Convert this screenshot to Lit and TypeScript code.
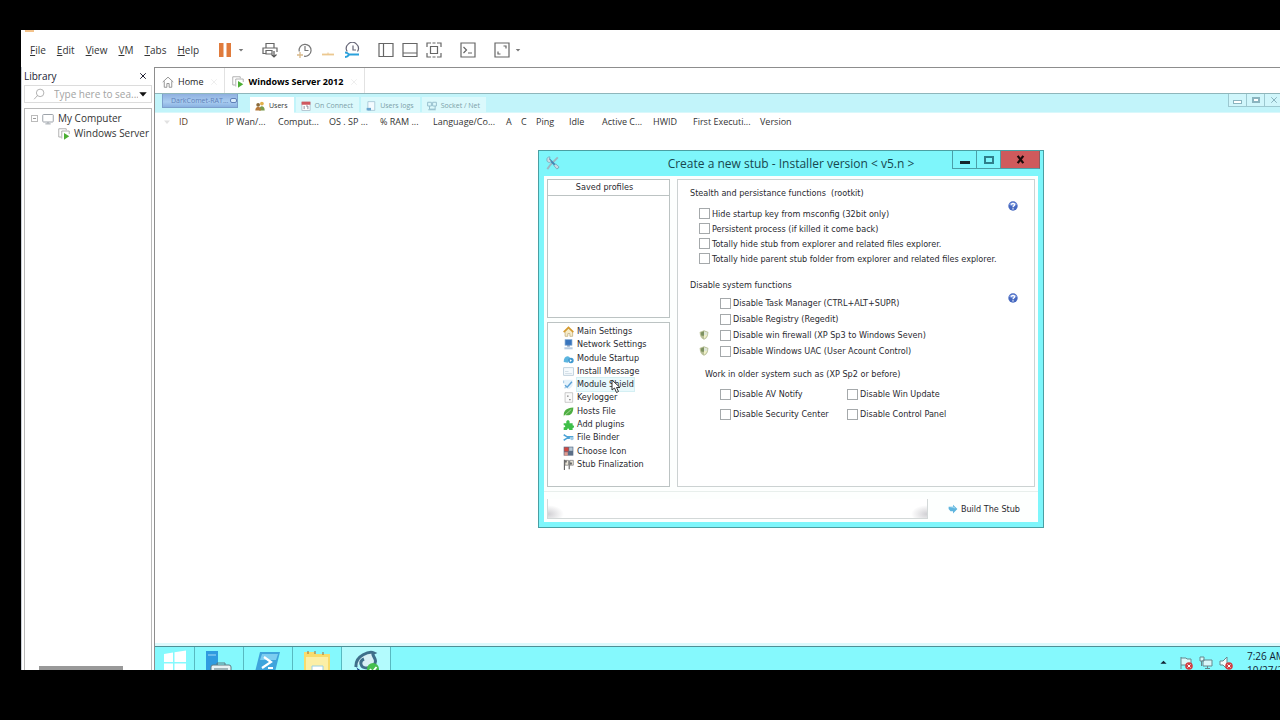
import { LitElement, html, css, svg, nothing } from "lit";
import { customElement } from "lit/decorators.js";

const glyphs: Record<string, any> = {
  home: svg`<path d="M1 8 8 1.500 15 8M3 7v8h3.500v-5h3v5H13V7" fill="none" stroke="#8a8a8a" stroke-width="1.200"/>`,
  vm: svg`<path d="M4 12H1V1h10v2" fill="none" stroke="#999"/><path d="M5 14V4h10v4" fill="none" stroke="#999"/><path d="M8 6.500v9l7-4.500z" fill="#4cae34"/>`,
  monitor: svg`<rect x="1" y="2" width="14" height="10" rx="1" fill="none" stroke="#9aa0a8" stroke-width="1.300"/><path d="M8 12v2M4.500 14.500h7" stroke="#9aa0a8" stroke-width="1.300"/>`,
  search: svg`<circle cx="9.500" cy="6.500" r="5" fill="none" stroke="#9a9a9a"/><path d="M6 10 1.500 15" stroke="#9a9a9a"/>`,
  pause: svg`<path d="M2 1h4.500v14H2zM9.500 1H14v14H9.500z" fill="#e07b3c"/>`,
  print: svg`<path d="M4 6V1.500h8V6M4 11.500H1V6h14v4M4 8.500h6V12H4z" fill="none" stroke="#666" stroke-width="1.200"/><path d="M12 9v6M9.500 12.500l2.500 2.500 2.500-2.500" fill="none" stroke="#555" stroke-width="1.200"/>`,
  clockadd: svg`<path d="M3.200 9.500A6 6 0 1 1 8 14.200M9 4v4.500h3.500" fill="none" stroke="#777" stroke-width="1.200"/><path d="M4 10v6M1 13h6" stroke="#d9b98a" stroke-width="1.300"/>`,
  dash: svg`<path d="M2 12.500h12" stroke="#ecc890" stroke-width="1.800"/><path d="M8 10.500v2" stroke="#ecc890"/>`,
  clockfix: svg`<path d="M3.200 9.500A6 6 0 1 1 13.500 9.500M9 3.500V8h3" fill="none" stroke="#667" stroke-width="1.200"/><path d="M1 10.500c3 0 3 1.500 4 2h10M1 15c3 0 3-1.500 4-2" fill="none" stroke="#2aa1dc" stroke-width="1.900"/>`,
  sideleft: svg`<path d="M1 1.500h14v13H1zM5.500 1.500v13" fill="none" stroke="#666" stroke-width="1.200"/>`,
  sidebottom: svg`<path d="M1 1.500h14v13H1zM1 11h14" fill="none" stroke="#666" stroke-width="1.200"/>`,
  fit: svg`<path d="M1 5V1h4M11 1h4v4M15 11v4h-4M5 15H1v-4M6.500 1h3M6.500 15h3M4.500 4.500h7v7h-7z" fill="none" stroke="#666" stroke-width="1.200"/>`,
  console: svg`<path d="M1 1h14v14H1zM3.500 5 6.500 8l-3 3M8 11h4" fill="none" stroke="#666" stroke-width="1.200"/>`,
  full: svg`<path d="M1 1h14v14H1zM9.500 4H12v2.500M4 9.500V12h2.500" fill="none" stroke="#666" stroke-width="1.200"/>`,
  caret: svg`<path d="M2 5h12l-6 7z" fill="currentColor"/>`,
  caretup: svg`<path d="M1 12h14L8 5z" fill="#123"/>`,
  close: svg`<path d="M2.500 2.500l11 11M13.500 2.500l-11 11" stroke="currentColor" stroke-width="2"/>`,
  closebold: svg`<path d="M3 1.500l10 13M13 1.500l-10 13" stroke="currentColor" stroke-width="4"/>`,
  users: svg`<circle cx="11" cy="4" r="3" fill="#e3b04b"/><path d="M6.500 15c0-9 9-9 9 0z" fill="#7a9a4a"/><circle cx="5" cy="6" r="3" fill="#8a6a3a"/><path d="M.5 15c0-8 9-8 9 0z" fill="#b7793a"/>`,
  calendar: svg`<rect x="1.500" y="2" width="13" height="13" fill="#fff" stroke="#9ab"/><path d="M1 1h14v5H1z" fill="#cf5860"/><path d="M5 8v5M8 8h3v5" stroke="#889" fill="none" stroke-width="1.500"/>`,
  page: svg`<path d="M3 1h11v14H3z" fill="#f4fbff" stroke="#8fb3c9"/><path d="M1 11h7v4H1z" fill="#6aa5cf"/>`,
  socket: svg`<path d="M1 2h6v6H1zM9 2h6v6H9zM4 8v5h9V8M2 14h12" fill="none" stroke="#93bccb" stroke-width="1.500"/>`,
  tools: svg`<path d="M13.500 1.500 5 10 1.500 15" stroke="#9db6c2" stroke-width="2.200" fill="none"/><path d="M3 3l11 11" stroke="#3f85b5" stroke-width="2.200"/><path d="M1 4.500C1 2 2 1 4.500 1L4 4l2 2-2 1.500C2 7 1 6.500 1 4.500zM11 9l4 3.500L12.500 15 9 11z" fill="#c7dbe4" stroke="#6895ab" stroke-width=".7"/>`,
  help: svg`<circle cx="8" cy="8" r="7.500" fill="#4668c0"/><path d="M2 6c1-5 11-5 12 0-3 2-9 2-12 0z" fill="#8fa8e6"/><path d="M5.500 6C5.500 3 10.500 3 10.500 6c0 2-2.500 2-2.500 4M8 11.500v2" fill="none" stroke="#fff" stroke-width="2"/>`,
  shield: svg`<path d="M8 .5 15 3c0 6-2 10-7 12.500C3 13 1 9 1 3z" fill="#b8bf96"/><path d="M8 2 3 4c0 3 .5 4 1 5h4z" fill="#7d9160"/><path d="M8 8h5c-1 3-2.500 4.500-5 6z" fill="#eff0c8"/><path d="M8 2v6h5.300L13.500 4z" fill="#dfe6d8"/>`,
  house: svg`<path d="M3 8v7h4v-4h3v4h4V8L8 3z" fill="#f7ecc8" stroke="#b9a675"/><path d="M1 9 8 2l7 7" stroke="#d59b30" stroke-width="2.400" fill="none"/>`,
  network: svg`<rect x="3" y="1" width="10" height="8" fill="#3975bd" stroke="#7aa4cf"/><path d="M6 9h4v2H6z" fill="#7290b5"/><path d="M2 12h12v3H2z" fill="#b8cce0"/>`,
  startup: svg`<path d="M1 13c0-7 4-10 9-7l-3 8z" fill="#5cb5df"/><circle cx="11.500" cy="11" r="4" fill="#3f98cf"/><path d="M10 9l3 2-3 2z" fill="#fff"/>`,
  message: svg`<rect x="1" y="2.500" width="14" height="11" fill="#f5fafd" stroke="#a9bfd0"/><path d="M3 11h10M3 8h5" stroke="#c5d3de"/>`,
  shieldblue: svg`<path d="M2 1h12v8c-1 3-4 5-6 6-2-1-5-3-6-6z" fill="#e4f2fb"/><path d="M3 9l3 3 7-8" stroke="#5ba1d6" stroke-width="2" fill="none"/><path d="M1 2v4M2 13l4-1" stroke="#9cc6e4" stroke-width="1.500"/>`,
  key: svg`<path d="M3 1h11v14H3z" fill="#fafafa" stroke="#b5b5b5"/><path d="M6 5h2v2H6zM9 10h2v2H9z" fill="#777"/>`,
  leaf: svg`<path d="M1 14C1 6 5 3 15 2c0 9-5 13-12 11z" fill="#4fae43"/><path d="M1 15 12 5" stroke="#c6eab9"/>`,
  plugin: svg`<path d="M1 6h4C3 1 11 0 9.500 6H14v3c3 0 3 4 0 4v3H9c0-3-3-3-3 0H1v-4c3 0 3-3 0-3z" fill="#3fbf49"/>`,
  binder: svg`<path d="M1 4l5 3h9M1 12l5-3h4" stroke="#4ca3d6" stroke-width="2.200" fill="none"/><circle cx="13" cy="9.500" r="2.500" fill="#9fcbe6"/>`,
  choose: svg`<rect x="1" y="1" width="14" height="13" fill="#5b6e87"/><path d="M2 2h6v6H2z" fill="#d2473f"/><path d="M9 2h5v5H9z" fill="#b6c7d5"/><path d="M2 9h5v5H2z" fill="#e39a8e"/>`,
  flag: svg`<path d="M2 1v15M9 2v13" stroke="#555" stroke-width="1.500"/><path d="M3 2h5v7H3zM10 2h5v7h-5z" fill="#e9e4d7" stroke="#777"/><path d="M3 2h2.500v3H3zM10 5h3v3h-3z" fill="#666"/>`,
  arrow: svg`<path d="M1 4.500h7V1l7 7-7 7v-3.500H4L1 8z" fill="#5eb5de"/><path d="M2 5h7V3l3 4z" fill="#a9dcf2"/>`,
};

const icon = (name: string, cls = "") =>
  html`<svg class="ic ${cls}" viewBox="0 0 16 16" aria-hidden="true">${glyphs[name]}</svg>`;

const iconStyles = css`
  :host, * { box-sizing: border-box; }
  .ic { width: 16px; height: 16px; flex: none; display: block; }
  .s8 { width: 8px; height: 8px; }
  .s10 { width: 10px; height: 10px; }
  .s12 { width: 12px; height: 12px; }
  .s6 { width: 6px; height: 6px; }
  button { font: inherit; color: inherit; background: none; border: 0; padding: 0; margin: 0; }
`;

@customElement("stub-dialog")
class StubDialog extends LitElement {
  static styles = [
    iconStyles,
    css`
      :host {
        display: flex;
        flex-direction: column;
        border: 1px solid #4a9fa3;
        background: #7ef6fb;
        padding: 0 5px 5px;
        font: 9px/16px "DejaVu Sans Condensed", "Open Sans", sans-serif;
        color: #2a2a30;
        white-space: nowrap;
      }
      .title { display: flex; height: 25px; padding-left: 2px; }
      .title .ic { margin-top: 5px; width: 14px; height: 14px; }
      .title h1 {
        flex: 1; margin: 0; text-align: center; padding-left: 70px;
        font: 12px/25px "Open Sans", sans-serif; color: #17474f;
      }
      .winbtns { display: flex; height: 18px; margin-right: -2px; }
      .winbtns button {
        border: 1px solid #4b9fa8; border-top: 0; border-right: 0; width: 24px;
        display: grid; place-items: center;
      }
      .winbtns .x { width: 40px; background: #cf5a5c; border-right: 1px solid #8f5a60; }
      .min { width: 10px; height: 3px; background: #15282b; margin-top: 5px; }
      .max { width: 10px; height: 8px; border: 2px solid #2e7f8a; }
      .winbtns .ic { width: 9px; height: 9px; margin: 0; color: #1c0b0b; }
      .client { flex: 1; display: flex; flex-direction: column; background: #fdfffe; }
      .body {
        flex: 1; display: grid; grid-template-columns: 123px 1fr; gap: 7px;
        padding: 3px 3px 4px; border-bottom: 1px solid #e8efec;
      }
      .left { display: grid; grid-template-rows: 139px 1fr; gap: 4px; }
      .box { border: 1px solid #bcc3c3; background: #fff; }
      .box h2 {
        font: inherit; line-height: 15px; margin: 0; text-align: center;
        padding-right: 8px; border-bottom: 1px solid #bcc3c3;
      }
      .tree {
        position: relative; list-style: none; margin: 0; padding: 2px 0 15px 15px;
        display: flex; flex-direction: column; justify-content: space-between;
        line-height: 13px;
      }
      .tree li { display: flex; align-items: center; gap: 3px; }
      .tree .ic { width: 11px; height: 11px; }
      .tree .on { background: #e9f9fc; outline: 1px solid #d4eff3; }
      .cursor { position: absolute; left: 63px; top: 56px; width: 10px; height: 14px; }
      .panel { border: 1px solid #ccd2d2; background: #fff; padding: 5px 16px 8px 12px; }
      section { display: grid; grid-template-columns: 1fr 10px; }
      section + section { margin-top: 11px; }
      section > .ic { margin-top: 16px; }
      h3 { font: inherit; margin: 0; }
      .rows { padding: 5px 0 0 9px; }
      .rows label { height: 15px; }
      .rows2 { padding: 2px 0 0 9px; }
      .rows2 label { height: 16px; }
      label, .line { display: flex; align-items: center; }
      .line .slot { width: 21px; flex: none; }
      label { gap: 2px; }
      input {
        appearance: none; width: 11px; height: 11px; margin: 0; flex: none;
        border: 1px solid #a5a9ab; background: #fff;
      }
      .older { padding: 7px 0 0 15px; }
      .grid {
        display: grid; grid-template-columns: 127px 1fr; padding: 2px 0 0 30px;
      }
      .grid label { height: 20px; }
      .foot { display: flex; align-items: center; height: 30px; padding: 3px 18px 0 3px; }
      .progress {
        flex: 1; height: 20px; border: 1px solid #d3d8d8; border-top: 0;
        background:
          radial-gradient(ellipse at 0 70%, #d0cfd3, #fff0 70%) left bottom / 16px 13px no-repeat,
          radial-gradient(ellipse at 100% 70%, #d0cfd3, #fff0 70%) right bottom / 16px 13px no-repeat,
          #fff;
      }
      .build { display: flex; align-items: center; gap: 3px; margin-left: 20px; }
    `,
  ];

  check(text: string) {
    return html`<label><input type="checkbox" />${text}</label>`;
  }

  render() {
    const tree = [
      ["house", "Main Settings"], ["network", "Network Settings"], ["startup", "Module Startup"],
      ["message", "Install Message"], ["shieldblue", "Module Shield"], ["key", "Keylogger"],
      ["leaf", "Hosts File"], ["plugin", "Add plugins"], ["binder", "File Binder"],
      ["choose", "Choose Icon"], ["flag", "Stub Finalization"],
    ];
    const system: [string, boolean][] = [
      ["Disable Task Manager (CTRL+ALT+SUPR)", false],
      ["Disable Registry (Regedit)", false],
      ["Disable win firewall (XP Sp3 to Windows Seven)", true],
      ["Disable Windows UAC (User Acount Control)", true],
    ];
    return html`
      <div class="title">
        ${icon("tools")}
        <h1>Create a new stub - Installer version &lt; v5.n &gt;</h1>
        <div class="winbtns">
          <button aria-label="Minimize"><span class="min"></span></button>
          <button aria-label="Maximize"><span class="max"></span></button>
          <button class="x" aria-label="Close">${icon("closebold")}</button>
        </div>
      </div>
      <div class="client">
        <div class="body">
          <div class="left">
            <div class="box"><h2>Saved profiles</h2></div>
            <ul class="box tree">
              ${tree.map(([i, t]) => html`<li>${icon(i)}<span class=${t === "Module Shield" ? "on" : ""}>${t}</span></li>`)}
              <svg class="cursor" viewBox="0 0 10 14" aria-hidden="true"><path d="M1 1v10l2.500-2 2 4.500 2-1-2-4H9z" fill="#fff" stroke="#333"/></svg>
            </ul>
          </div>
          <div class="panel">
            <section>
              <div>
                <h3>Stealth and persistance functions &nbsp;(rootkit)</h3>
                <div class="rows">
                  ${["Hide startup key from msconfig (32bit only)",
                    "Persistent process (if killed it come back)",
                    "Totally hide stub from explorer and related files explorer.",
                    "Totally hide parent stub folder from explorer and related files explorer."].map((t) => this.check(t))}
                </div>
              </div>
              ${icon("help", "s10")}
            </section>
            <section>
              <div>
                <h3>Disable system functions</h3>
                <div class="rows2">
                  ${system.map(([t, s]) => html`<div class="line"><span class="slot">${s ? icon("shield", "s10") : nothing}</span>${this.check(t)}</div>`)}
                </div>
              </div>
              ${icon("help", "s10")}
            </section>
            <h3 class="older">Work in older system such as (XP Sp2 or before)</h3>
            <div class="grid">
              ${["Disable AV Notify", "Disable Win Update", "Disable Security Center", "Disable Control Panel"].map((t) => this.check(t))}
            </div>
          </div>
        </div>
        <div class="foot">
          <div class="progress"></div>
          <button class="build">${icon("arrow", "s10")}Build The Stub</button>
        </div>
      </div>
    `;
  }
}

@customElement("app-root")
class AppRoot extends LitElement {
  static styles = [
    iconStyles,
    css`
      :host {
        display: flex; flex-direction: column; height: 100vh; background: #000;
        padding: 30px 0 50px 21px; overflow: hidden;
        font: 11px/16px "Open Sans", sans-serif; color: #333; white-space: nowrap;
      }
      .app { flex: 1; min-height: 0; display: flex; flex-direction: column; background: #fff; overflow: hidden; }
      .logo { height: 2px; width: 9px; margin-left: 4px; background: #f3c28a; }
      .menu { display: flex; align-items: center; height: 35px; padding-left: 9px; }
      .menus { display: flex; gap: 11px; width: 187px; font-size: 10px; }
      .menus button::first-letter { text-decoration: underline; }
      .tools { display: flex; align-items: center; color: #777; }
      .tools button { display: flex; align-items: center; gap: 5px; }
      .g8 { margin-left: 8px; }
      .g18 { margin-left: 18px; }
      .work { flex: 1; min-height: 0; display: grid; grid-template-columns: 131px 1fr; gap: 2px; }
      aside { display: flex; flex-direction: column; padding-left: 2px; border-left: 1px solid #c9ced6; }
      .lib { display: flex; justify-content: space-between; align-items: center; height: 18px; font-size: 10px; padding-right: 5px; color: #223; }
      .find {
        display: flex; align-items: center; height: 18px; padding: 0 3px 0 8px;
        border: 1px solid #dcdcdc; color: #111;
      }
      .find input {
        flex: 1; min-width: 0; border: 0; outline: 0; padding: 0 0 0 9px; height: 16px;
        font: 10px/16px "Open Sans", sans-serif; background: none;
      }
      .find input::placeholder { color: #a3a3a3; opacity: 1; }
      .tree {
        flex: 1; margin-top: 5px; border: 1px solid #b9b9b9; border-bottom: 0; padding-top: 2px;
        display: flex; flex-direction: column; overflow: hidden; line-height: 15px; font-size: 10px;
      }
      .node { display: flex; align-items: center; gap: 4px; padding-left: 6px; }
      .child { padding-left: 33px; }
      .exp { width: 7px; height: 7px; border: 1px solid #bbb; display: grid; place-items: center; }
      .exp::after { content: ""; width: 3px; height: 1px; background: #999; }
      .scroll { height: 4px; width: 84px; margin: auto 0 0 14px; background: #999; }
      main { display: flex; flex-direction: column; min-width: 0; border: 1px solid #8d8d8d; border-width: 1px 0 0 1px; position: relative; }
      .tabs { display: flex; height: 25px; font-size: 9px; }
      .tab {
        display: flex; align-items: center; gap: 4px; padding: 2px 6px 0 7px;
        border-right: 1px solid #e2e2e2; color: #222; height: 100%;
      }
      .tab.cur { font-weight: 700; color: #000; }
      .tab .end { color: #eee; margin-left: 3px; }
      .mdi { display: flex; height: 20px; background: #c2f4fa; border-top: 1px solid #8fb6bb; border-bottom: 1px solid #d9f8fb; }
      .wintitle {
        display: flex; align-items: center; height: 14px; margin-left: 7px; width: 76px; padding-left: 8px; gap: 2px;
        background: linear-gradient(#8fb0e0, #a9cdf0 60%, #8ab2e2); border: 1px solid #7da0cc; border-top: 0;
        font-size: 7px; color: #5f80b8;
      }
      .knob { width: 7px; height: 5px; border: 1px solid #5f80b8; border-radius: 2px; background: #d9ecfb; }
      .pages { display: flex; gap: 2px; margin: 3px 0 0 12px; font-size: 7px; color: #7ba0a8; }
      .pages button { display: flex; align-items: center; gap: 4px; padding: 2px 6px 0 5px; background: #dbf9fc; height: 16px; }
      .pages .cur { background: #fff; color: #333; }
      .mdibtns { display: flex; margin: 0 -2px 0 auto; height: 13px; color: #8ab4bf; }
      .mdibtns button { width: 18px; border: 1px solid #9cc8d0; border-top: 0; border-right: 0; display: grid; place-items: center; background: #d0f6fb; }
      .m1 { width: 9px; height: 4px; border: 1px solid #8ab4bf; background: #fff; margin-top: 3px; }
      .m2 { width: 8px; height: 6px; border: 2px double #8ab4bf; background: #fff; }
      table { border-collapse: collapse; table-layout: fixed; width: 661px; font-size: 9px; }
      th { font-weight: 400; text-align: left; padding: 0; height: 18px; color: #333; }
      th:nth-child(2) { color: #5c3b22; }
      th .ic { margin-left: 8px; color: #e2e2e2; }
      .grow { flex: 1; }
      .task { display: flex; height: 24px; border-top: 1px solid #4f8f96; background: #85f9fd; box-shadow: 0 -3px 0 #dcfafc; overflow: hidden; }
      .task > button { border-right: 1px solid #58b9c1; width: 49px; padding: 3px 0 0; height: 24px; overflow: hidden; display: flex; justify-content: center; }
      .task > .start { width: 40px; }
      .task > .act { background: #b3fbfd; }
      .task > button svg { width: 28px; height: 26px; flex: none; }
      .tray { margin-left: auto; display: flex; align-items: flex-start; gap: 6px; padding-top: 9px; }
      .tray svg { width: 14px; height: 14px; }
      .tray .ic { width: 7px; height: 12px; margin-right: 6px; }
      .clock { width: 33px; margin: -7px 0 0 8px; font-size: 10px; line-height: 14px; color: #123; overflow: hidden; }
      stub-dialog { position: absolute; left: 383px; top: 82px; width: 506px; height: 378px; }
    `,
  ];

  render() {
    const cols: [any, number][] = [
      [icon("caret", "s8"), 24], ["ID", 47], ["IP Wan/...", 52], ["Comput...", 51], ["OS . SP ...", 51],
      ["% RAM ...", 53], ["Language/Co...", 73], ["A", 15], ["C", 15], ["Ping", 33], ["Idle", 33],
      ["Active C...", 51], ["HWID", 40], ["First Executi...", 67], ["Version", 56],
    ];
    return html`
      <div class="app">
        <div class="logo"></div>
        <div class="menu">
          <nav class="menus">
            <button>File</button><button>Edit</button><button>View</button>
            <button>VM</button><button>Tabs</button><button>Help</button>
          </nav>
          <div class="tools">
            <button aria-label="Pause">${icon("pause")}${icon("caret", "s6")}</button>
            <button class="g18" aria-label="Send keys">${icon("print")}</button>
            <button class="g18" aria-label="Take snapshot">${icon("clockadd")}</button>
            <button class="g8" aria-label="Revert snapshot">${icon("dash")}</button>
            <button class="g8" aria-label="Manage snapshots">${icon("clockfix")}</button>
            <button class="g18" aria-label="Library">${icon("sideleft")}</button>
            <button class="g8" aria-label="Thumbnails">${icon("sidebottom")}</button>
            <button class="g8" aria-label="Fit">${icon("fit")}</button>
            <button class="g18" aria-label="Console">${icon("console")}</button>
            <button class="g18" aria-label="Full screen">${icon("full")}${icon("caret", "s6")}</button>
          </div>
        </div>
        <div class="work">
          <aside>
            <div class="lib">Library<button aria-label="Close library">${icon("close", "s8")}</button></div>
            <div class="find">${icon("search", "s12")}<input aria-label="Search" placeholder="Type here to sea..." />${icon("caret", "s10")}</div>
            <div class="tree">
              <div class="node"><span class="exp"></span>${icon("monitor", "s12")}My Computer</div>
              <div class="node child">${icon("vm", "s12")}Windows Server 2012</div>
              <div class="scroll"></div>
            </div>
          </aside>
          <main>
            <div class="tabs">
              <button class="tab">${icon("home", "s12")}Home${icon("close", "s8 end")}</button>
              <button class="tab cur">${icon("vm", "s12")}Windows Server 2012${icon("close", "s8 end")}</button>
            </div>
            <div class="mdi">
              <div class="wintitle">DarkComet-RAT...<span class="knob"></span></div>
              <div class="pages">
                <button class="cur">${icon("users", "s10")}Users</button>
                <button>${icon("calendar", "s10")}On Connect</button>
                <button>${icon("page", "s10")}Users logs</button>
                <button>${icon("socket", "s10")}Socket / Net</button>
              </div>
              <div class="mdibtns">
                <button aria-label="Minimize"><span class="m1"></span></button>
                <button aria-label="Restore"><span class="m2"></span></button>
                <button aria-label="Close">${icon("close", "s8")}</button>
              </div>
            </div>
            <table>
              <colgroup>${cols.map(([, w]) => html`<col style="width:${w}px" />`)}</colgroup>
              <thead><tr>${cols.map(([t]) => html`<th>${t}</th>`)}</tr></thead>
            </table>
            <div class="grow"></div>
            <div class="task">
              <button class="start" aria-label="Start"><svg viewBox="0 0 28 26"><path d="M3 4 12 2.500V12H3zM13.500 2.300 25 .5V12H13.500zM3 13.500h9V23l-9-1.500zM13.500 13.500H25V25l-11.500-1.800z" fill="#fff"/></svg></button>
              <button aria-label="Server Manager"><svg viewBox="0 0 28 26"><path d="M1 1h12v22H1z" fill="#2f9be0"/><path d="M3 5h8" stroke="#a4dbf7"/><rect x="6" y="15" width="20" height="10" rx="2" fill="#e8f2f4" stroke="#5f7a82"/><path d="M12 15v-2h8v2M9 19h14" fill="none" stroke="#5f7a82"/></svg></button>
              <button aria-label="PowerShell"><svg viewBox="0 0 28 26"><path d="M6 2h20l-5 20H1z" fill="#3fa4dc"/><path d="M8 4h16l-2 6H6z" fill="#7ccdf0"/><path d="M10 7l7 5-9 6M14 18h5" fill="none" stroke="#fff" stroke-width="2.200"/></svg></button>
              <button aria-label="Explorer"><svg viewBox="0 0 28 26"><path d="M1 2h10l2 2h14v21H1z" fill="#f8dc6c"/><path d="M3 7h22v15H3z" fill="#fcefa6"/><path d="M9 16h11v9H9z" fill="#fff" stroke="#9ad0e2"/><path d="M5 1v3M12 1v3M20 2v3" stroke="#a06a30"/></svg></button>
              <button class="act" aria-label="Remote manager"><svg viewBox="0 0 28 26"><path d="M4 17C3 5 18 1 22 3c-2 1-1 2 1 6 2 5-3 9-8 9-7 0-8-7-3-9" fill="#d8f0f5" stroke="#3f6f8a" stroke-width="3"/><path d="M4 16c2 4 6 5 9 5v5H8z" fill="#173a8c"/><circle cx="21" cy="19" r="6" fill="#45bf4f"/><path d="M18 19l2.500 3 4-5" fill="none" stroke="#fff" stroke-width="1.800"/></svg></button>
              <div class="tray">
                ${icon("caretup")}
                <svg viewBox="0 0 14 14"><path d="M2 1v12M2 2h5l1 1h4v6H2" fill="#d9f8fa" stroke="#66878d"/><circle cx="10" cy="10" r="3.800" fill="#d23c42"/><path d="M8.500 8.500l3 3M11.500 8.500l-3 3" stroke="#fff"/></svg>
                <svg viewBox="0 0 14 14"><path d="M4 4h9v6H4zM1 1h4v4H1zM2.500 5v5M6 12.500h5M8.500 10v2" fill="#d9f8fa" stroke="#66878d"/></svg>
                <svg viewBox="0 0 14 14"><path d="M1 5h3l4-4v12l-4-4H1z" fill="#f2fdfd" stroke="#66878d"/><circle cx="10" cy="10" r="3.800" fill="#d23c42"/><path d="M8.500 8.500l3 3M11.500 8.500l-3 3" stroke="#fff"/></svg>
                <div class="clock">7:26 AM<br />10/27/2016</div>
              </div>
            </div>
            <stub-dialog></stub-dialog>
          </main>
        </div>
      </div>
    `;
  }
}
